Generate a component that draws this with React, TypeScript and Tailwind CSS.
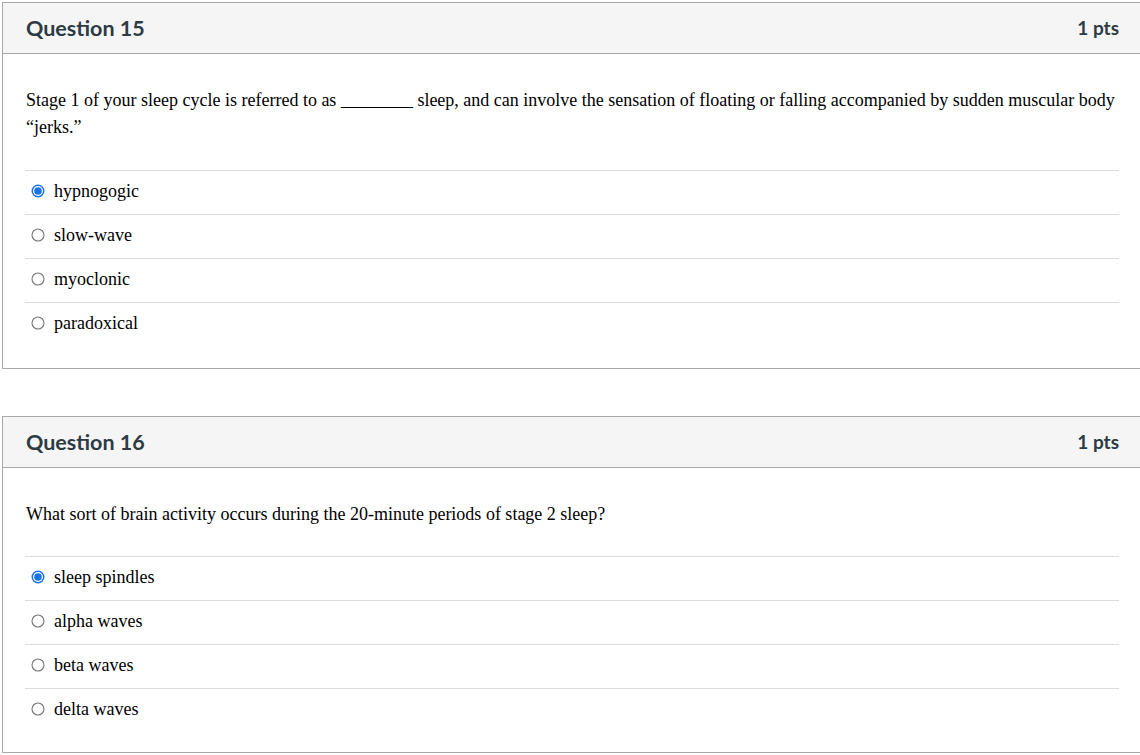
import React from 'react';

type Question = {
  title: string;
  points: string;
  text: React.ReactNode;
  answers: string[];
  selected: number;
  listClass: string;
};

const questions: Question[] = [
  {
    title: 'Question 15',
    points: '1 pts',
    text: (
      <>
        Stage 1 of your sleep cycle is referred to as ________ sleep, and can involve the sensation of floating or
        falling accompanied by sudden muscular body “jerks.”
      </>
    ),
    answers: ['hypnogogic', 'slow-wave', 'myoclonic', 'paradoxical'],
    selected: 0,
    listClass: 'mt-[29px] mb-[22px]',
  },
  {
    title: 'Question 16',
    points: '1 pts',
    text: <>What sort of brain activity occurs during the 20-minute periods of stage 2 sleep?</>,
    answers: ['sleep spindles', 'alpha waves', 'beta waves', 'delta waves'],
    selected: 0,
    listClass: 'mt-[28px] mb-[20px]',
  },
];

function Radio({ checked }: { checked: boolean }) {
  if (checked) {
    return (
      <svg width="14" height="14" viewBox="0 0 14 14" className="shrink-0">
        <circle cx="7" cy="7" r="6.5" fill="#1a73e8" />
        <circle cx="7" cy="7" r="5" fill="#fff" />
        <circle cx="7" cy="7" r="3.8" fill="#1a73e8" />
      </svg>
    );
  }
  return (
    <svg width="14" height="14" viewBox="0 0 14 14" className="shrink-0">
      <circle cx="7" cy="7" r="6" fill="#fff" stroke="#767676" strokeWidth="1.1" />
    </svg>
  );
}

function QuestionCard({ q, className }: { q: Question; className?: string }) {
  return (
    <div className={`w-[1140px] border border-[#a8a8a8] bg-white ${className ?? ''}`}>
      <div className="h-[51px] px-[23px] flex items-center justify-between bg-[#f5f5f5] border-b border-[#a8a8a8] text-[#2d3b45] font-['Lato',sans-serif] font-bold">
        <span className="text-[21.5px]">{q.title}</span>
        <span className="text-[19px] mr-[-1px]">{q.points}</span>
      </div>
      <div className="px-[22px] pt-[33px] font-['Liberation_Serif',serif] text-[18px] text-black">
        <p className="leading-[27px] pl-[1px]">{q.text}</p>
        <div className={q.listClass}>
          {q.answers.map((a, i) => (
            <div key={a} className="h-[44px] border-t border-[#dcdcdc] flex items-center pl-[6px] gap-[9px] pb-[3px]">
              <Radio checked={i === q.selected} />
              <span className="leading-[20px]">{a}</span>
            </div>
          ))}
        </div>
      </div>
    </div>
  );
}

export default function App() {
  return (
    <div className="w-[1140px] h-[755px] overflow-hidden bg-white pt-[2px] pl-[2px]">
      <QuestionCard q={questions[0]} />
      <QuestionCard q={questions[1]} className="mt-[47px]" />
    </div>
  );
}
